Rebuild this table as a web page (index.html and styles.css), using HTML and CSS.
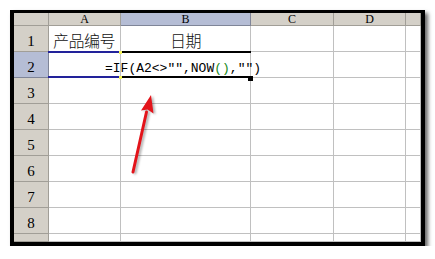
FILE: index.html
```html
<!DOCTYPE html>
<html lang="zh">
<head>
<meta charset="utf-8">
<title>工作表</title>
<link rel="stylesheet" href="styles.css">
</head>
<body>
<div class="sheet">
  <div class="grid">
    <div class="corner"></div>
    <div class="colhead">A</div>
    <div class="colhead active">B</div>
    <div class="colhead">C</div>
    <div class="colhead">D</div>
    <div class="colhead"></div>

    <div class="rowhead">1</div>
    <div class="cell left cjk">产品编号</div>
    <div class="cell center cjk">日期</div>
    <div class="cell"></div><div class="cell"></div><div class="cell"></div>

    <div class="rowhead active">2</div>
    <div class="cell ref"><span class="dot dot-top"></span><span class="dot dot-bottom"></span></div>
    <div class="cell current"></div>
    <div class="cell"></div><div class="cell"></div><div class="cell"></div>

    <div class="rowhead">3</div>
    <div class="cell"></div><div class="cell"></div><div class="cell"></div><div class="cell"></div><div class="cell"></div>
    <div class="rowhead">4</div>
    <div class="cell"></div><div class="cell"></div><div class="cell"></div><div class="cell"></div><div class="cell"></div>
    <div class="rowhead">5</div>
    <div class="cell"></div><div class="cell"></div><div class="cell"></div><div class="cell"></div><div class="cell"></div>
    <div class="rowhead">6</div>
    <div class="cell"></div><div class="cell"></div><div class="cell"></div><div class="cell"></div><div class="cell"></div>
    <div class="rowhead">7</div>
    <div class="cell"></div><div class="cell"></div><div class="cell"></div><div class="cell"></div><div class="cell"></div>
    <div class="rowhead">8</div>
    <div class="cell"></div><div class="cell"></div><div class="cell"></div><div class="cell"></div><div class="cell"></div>
    <div class="rowhead"></div>
    <div class="cell"></div><div class="cell"></div><div class="cell"></div><div class="cell"></div><div class="cell"></div>
  </div>

  <!-- in-cell editor for B2 -->
  <div class="editor">=IF(A2&lt;&gt;"",NOW<span class="paren">()</span>,"")</div>

  <!-- red annotation arrow -->
  <svg class="arrow" viewBox="14 13 407 229" width="407" height="229" aria-hidden="true">
    <line x1="133" y1="172" x2="146.5" y2="112" stroke="#e3141b" stroke-width="3" stroke-linecap="round"/>
    <polygon points="151,95 153.5,113.5 147.6,109.5 141,110.5" fill="#e3141b"/>
  </svg>
</div>
</body>
</html>
```

FILE: styles.css
```css
html, body {
  margin: 0;
  padding: 0;
  background: #ffffff;
}

body {
  font-family: "Liberation Serif", serif;
}

.sheet {
  position: relative;
  width: 407px;
  height: 229px;
  margin: 10px 0 0 10px;
  border: 4px solid #000;
  border-top-width: 3px;
  background: #fff;
  box-shadow: 3px 3px 4px rgba(0, 0, 0, 0.6);
}

.grid {
  display: grid;
  grid-template-columns: 35px 72px 130px 83px 72px 15px;
  grid-template-rows: 13px repeat(8, 26px) 8px;
  width: 407px;
  height: 229px;
  overflow: hidden;
}

.grid > div {
  box-sizing: border-box;
  border-right: 1px solid #c0c0c0;
  border-bottom: 1px solid #c0c0c0;
  min-width: 0;
}

.corner,
.colhead,
.rowhead {
  background: #d4d0c8;
  color: #000;
}

.grid > .corner,
.grid > .colhead,
.grid > .rowhead {
  border-right-color: #a19e97;
  border-bottom-color: #a19e97;
}

.colhead {
  display: flex;
  align-items: center;
  justify-content: center;
  font-size: 12px;
  line-height: 12px;
}

.rowhead {
  display: flex;
  align-items: flex-end;
  justify-content: center;
  font-size: 15px;
  line-height: 15px;
  padding-bottom: 2px;
}

.grid > .colhead.active,
.grid > .rowhead.active {
  background: #b5bdd5;
  border-right-color: #7f8598;
  border-bottom-color: #7f8598;
}

.cell {
  display: flex;
  align-items: flex-end;
  font-size: 15px;
  line-height: 18px;
  padding-bottom: 2px;
  white-space: nowrap;
}

.cjk {
  font-family: "Noto Sans CJK SC", sans-serif;
  font-weight: 300;
  font-size: 16px;
  letter-spacing: -0.5px;
  color: #111;
}

.left {
  padding-left: 4px;
}

.center {
  justify-content: center;
}

/* referenced range A2 */
.ref {
  position: relative;
}

.ref::after {
  content: "";
  position: absolute;
  left: -1px;
  right: -1px;
  top: -1px;
  bottom: -1px;
  border-top: 2px solid #22229a;
  border-bottom: 2px solid #22229a;
}

.dot {
  position: absolute;
  right: -2px;
  width: 3px;
  height: 3px;
  background: #f4f45a;
  z-index: 2;
}

.dot-top {
  top: -1px;
}

.dot-bottom {
  bottom: -2px;
}

/* active cell B2 */
.current {
  position: relative;
}

.current::after {
  content: "";
  position: absolute;
  left: -1px;
  right: -1px;
  top: -1px;
  bottom: -1px;
  border-top: 2px solid #000;
  border-bottom: 2px solid #000;
}

.current::before {
  content: "";
  position: absolute;
  right: -3px;
  bottom: -4px;
  width: 5px;
  height: 5px;
  background: #000;
  z-index: 2;
}

.editor {
  position: absolute;
  left: 91px;
  top: 48px;
  font-family: "Liberation Mono", monospace;
  font-size: 13px;
  line-height: 15px;
  color: #000;
  white-space: pre;
}

.paren {
  color: #1a8a1a;
}

.arrow {
  position: absolute;
  left: 0;
  top: 0;
  filter: drop-shadow(2px 1px 1px rgba(0, 0, 0, 0.3));
  overflow: visible;
}
```
